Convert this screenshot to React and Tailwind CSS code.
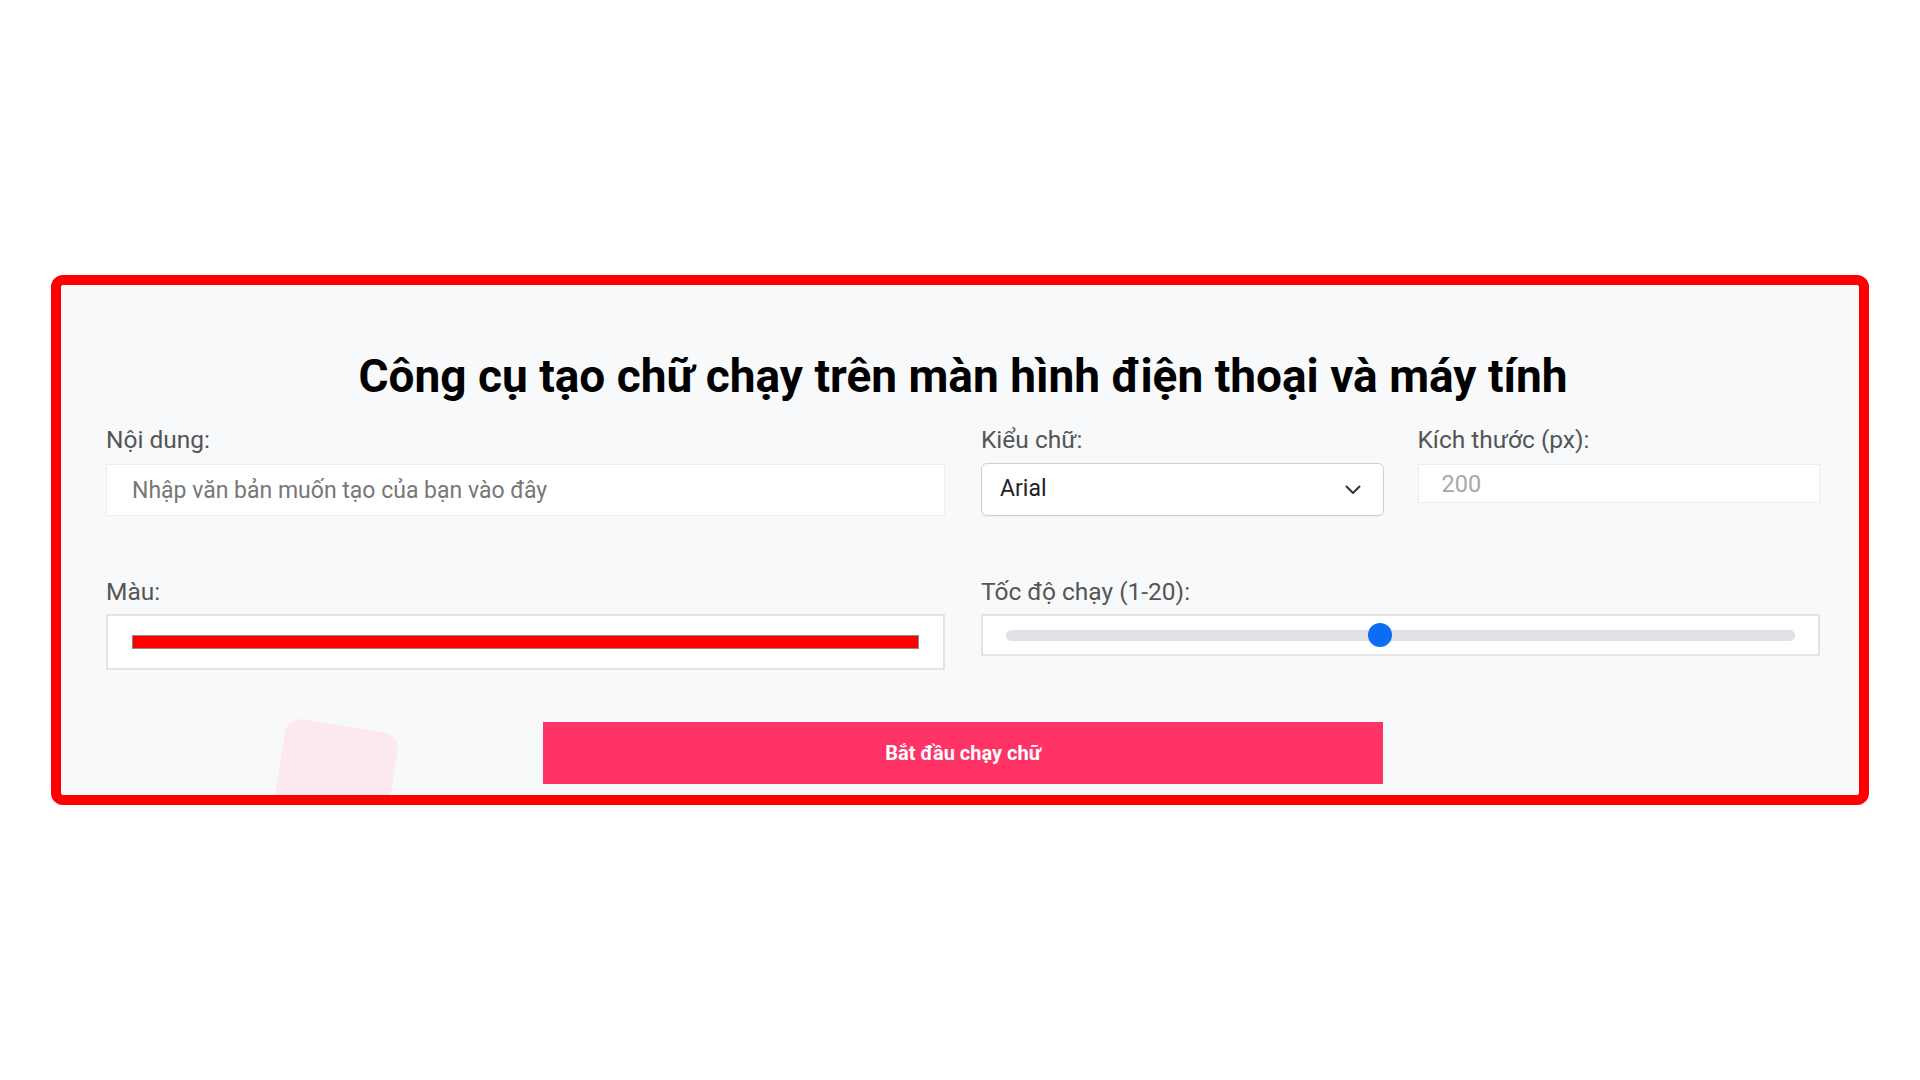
import React from "react";

function Label({ children, className = "" }) {
  return (
    <div className={"text-[24.5px] leading-[28px] text-[#555555] " + className}>
      {children}
    </div>
  );
}

export default function App() {
  const speed = 10;
  const frac = (speed - 1) / 19;
  return (
    <div className="min-h-screen w-full bg-white font-['Roboto','Noto_Sans',sans-serif]">
      <div className="px-[51px] pt-[275px]">
        <div className="relative h-[530px] overflow-hidden rounded-[12px] border-[10px] border-[#ff0000] bg-[#f8f9fa]">
          <div className="absolute left-[214px] top-[440px] h-[150px] w-[114px] rotate-[9deg] rounded-[16px] bg-[#fce9ee]" />
          <div className="relative pl-[45px] pr-[39px] pt-[64px]">
            <h1 className="text-center text-[46px] font-bold leading-[54px] text-black">
              Công cụ tạo chữ chạy trên màn hình điện thoại và máy tính
            </h1>

            <div className="mt-[23px] grid grid-cols-2 gap-x-[36px]">
              <div>
                <Label className="mb-[10px]">Nội dung:</Label>
                <input
                  type="text"
                  placeholder="Nhập văn bản muốn tạo của bạn vào đây"
                  className="mt-[1px] block h-[52px] w-full border border-[#eceef1] bg-white px-[25px] text-[23px] text-[#333] outline-none placeholder:text-[#777777]"
                />
              </div>
              <div className="grid grid-cols-2 gap-x-[34px]">
                <div>
                  <Label className="mb-[9px]">Kiểu chữ:</Label>
                  <div className="flex h-[53px] w-full items-center justify-between rounded-[6px] border border-[#cfcfcf] bg-white pl-[18px] pr-[22px] shadow-[0_1px_1px_rgba(0,0,0,0.05)]">
                    <span className="text-[23px] text-[#222222]">Arial</span>
                    <svg width="16" height="10" viewBox="0 0 16 10" fill="none">
                      <path d="M1.5 1.5 L8 8 L14.5 1.5" stroke="#333" strokeWidth="2" strokeLinecap="round" strokeLinejoin="round" />
                    </svg>
                  </div>
                </div>
                <div>
                  <Label className="mb-[10px]">Kích thước (px):</Label>
                  <input
                    type="text"
                    placeholder="200"
                    className="block h-[39px] w-full border border-[#eceef3] bg-white px-[23px] text-[23.5px] text-[#333] outline-none placeholder:text-[#a8a8a8]"
                  />
                </div>
              </div>
            </div>

            <div className="mt-[62px] grid grid-cols-2 gap-x-[36px]">
              <div>
                <Label className="mb-[8px]">Màu:</Label>
                <div className="flex h-[56px] w-full items-center border-2 border-[#e4e4e4] bg-white px-[24px]">
                  <div className="h-[14px] w-full border border-[#8a8a8a] bg-[#ff0000]" />
                </div>
              </div>
              <div>
                <Label className="mb-[8px]">Tốc độ chạy (1-20):</Label>
                <div className="flex h-[42px] w-full items-center border-2 border-[#e4e4e4] bg-white px-[23px]">
                  <div className="relative h-[11px] w-full rounded-full bg-[#dfe1e4]">
                    <div
                      className="absolute top-1/2 h-[24px] w-[24px] -translate-y-1/2 rounded-full bg-[#0b6cf5]"
                      style={{ left: `calc(${frac * 100}% - ${frac * 24}px)` }}
                    />
                  </div>
                </div>
              </div>
            </div>

            <div className="mt-[52px] flex justify-center">
              <button className="h-[62px] w-[840px] bg-[#ff3366] text-[20px] font-bold text-white">
                Bắt đầu chạy chữ
              </button>
            </div>
          </div>
        </div>
      </div>
    </div>
  );
}
